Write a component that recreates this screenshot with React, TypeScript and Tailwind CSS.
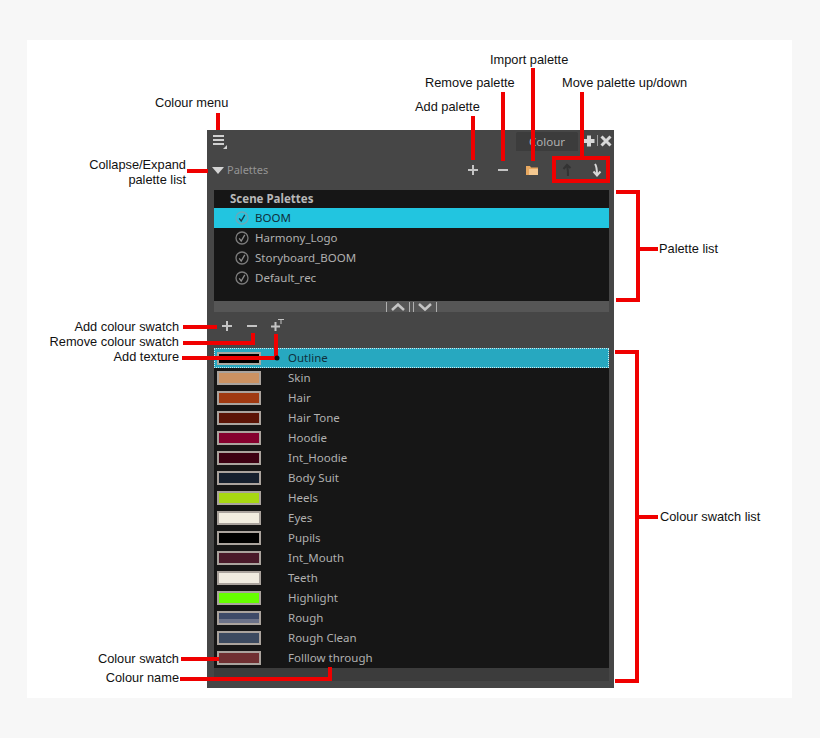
import React from "react";

const palettes = ["Harmony_Logo", "Storyboard_BOOM", "Default_rec"];

const swatches = [
  { name: "Skin", color: "bg-[#cc9262]" },
  { name: "Hair", color: "bg-[#a03a12]" },
  { name: "Hair Tone", color: "bg-[#5c1406]" },
  { name: "Hoodie", color: "bg-[#85002e]" },
  { name: "Int_Hoodie", color: "bg-[#3d0012]" },
  { name: "Body Suit", color: "bg-[#16202e]" },
  { name: "Heels", color: "bg-[#a8d812]" },
  { name: "Eyes", color: "bg-[#f2ede0]" },
  { name: "Pupils", color: "bg-black" },
  { name: "Int_Mouth", color: "bg-[#4a1a2a]" },
  { name: "Teeth", color: "bg-[#f0ebe0]" },
  { name: "Highlight", color: "bg-[#66ff00]" },
  { name: "Rough", color: "bg-[#3e4a68]", rough: true },
  { name: "Rough Clean", color: "bg-[#3c4a60]" },
  { name: "Folllow through", color: "bg-[#703032]" },
];

const labels = [
  { text: "Colour menu", cls: "left-[155px] top-[95px]" },
  { text: "Add palette", cls: "left-[415px] top-[99px]" },
  { text: "Remove palette", cls: "left-[425px] top-[75px]" },
  { text: "Import palette", cls: "left-[490px] top-[52px]" },
  { text: "Move palette up/down", cls: "left-[562px] top-[75px]" },
  { text: "Palette list", cls: "left-[659px] top-[241px]" },
  { text: "Colour swatch list", cls: "left-[660px] top-[509px]" },
  { text: "Collapse/Expand", cls: "right-[634px] top-[157px]" },
  { text: "palette list", cls: "right-[634px] top-[172px]" },
  { text: "Add colour swatch", cls: "right-[641px] top-[319px]" },
  { text: "Remove colour swatch", cls: "right-[641px] top-[334px]" },
  { text: "Add texture", cls: "right-[641px] top-[349px]" },
  { text: "Colour swatch", cls: "right-[641px] top-[651px]" },
  { text: "Colour name", cls: "right-[641px] top-[670px]" },
];

const CheckIcon = ({ active }: { active?: boolean }) => (
  <svg width="14" height="14" viewBox="0 0 14 14" fill="none" className="shrink-0">
    <circle cx="7" cy="7" r="6" stroke={active ? "#6aa8b8" : "#7c7c7c"} strokeWidth="1.3" />
    <path d="M4.2 7.4 L6.2 10 L9.8 3.8" stroke={active ? "#1c3a48" : "#8c8c8c"} strokeWidth="1.3" />
  </svg>
);

const Plus = () => (
  <svg width="12" height="12" viewBox="0 0 12 12" fill="#c4c4c4">
    <rect x="5" y="1" width="2" height="10" />
    <rect x="1" y="5" width="10" height="2" />
  </svg>
);

const Minus = () => (
  <svg width="12" height="12" viewBox="0 0 12 12" fill="#c4c4c4">
    <rect x="1" y="5" width="10" height="2" />
  </svg>
);

const Annotations = () => (
  <svg width="820" height="738" className="absolute left-0 top-0 pointer-events-none" fill="none" stroke="#f00000" strokeWidth="4">
    <path d="M218 113V130" />
    <path d="M187 171H208" />
    <path d="M473 116V160" />
    <path d="M503 92V161" />
    <path d="M533 68V161" />
    <path d="M582 92V157" />
    <rect x="554" y="158" width="54" height="23" />
    <path d="M616 192H638V300H616" />
    <path d="M638 249H658" />
    <path d="M615 352H637V681H615" />
    <path d="M637 517H658" />
    <path d="M183 327H217" />
    <path d="M183 343H253V333" />
    <path d="M182 358H276V334" />
    <path d="M181 659H219" />
    <path d="M180 679H330V667" />
    <circle cx="277" cy="358" r="2.500" fill="#111" stroke="none" />
  </svg>
);

const App = () => {
  return (
    <div className="relative w-[820px] h-[738px] bg-[#f7f7f7] pt-[40px] pl-[27px] overflow-hidden font-['Liberation_Sans',sans-serif]">
      <div className="w-[765px] h-[658px] bg-white pt-[90px] pl-[180px]">
        {/* Colour panel */}
        <div className="w-[407px] h-[558px] bg-[#464646] flex flex-col font-['Noto_Sans',sans-serif] text-[11.5px] text-[#b0b0b0]">
          {/* Title row */}
          <div className="h-[21px] flex items-center pl-[6px]">
            <div className="relative w-[14px] h-[17px] flex flex-col gap-[2px] pt-[3px]">
              <div className="h-[2px] w-[11px] bg-[#d0d0d0]" />
              <div className="h-[2px] w-[11px] bg-[#d0d0d0]" />
              <div className="h-[2px] w-[11px] bg-[#d0d0d0]" />
              <div className="absolute right-0 bottom-0 w-0 h-0 border-l-[4px] border-b-[4px] border-l-transparent border-b-[#d0d0d0]" />
            </div>
            <div className="ml-[289px] mt-[2px] w-[62px] h-[19px] rounded-t-[2px] bg-[#3c3c3c] flex items-center justify-center">
              Colour
            </div>
            <div className="ml-[5px] flex items-center">
              <svg width="12" height="12" viewBox="0 0 12 12" fill="#d8d8d8">
                <rect x="4" y="0.5" width="4" height="11" />
                <rect x="0.5" y="4" width="11" height="4" />
              </svg>
              <div className="w-px h-[11px] bg-[#9a9a9a] mx-[2px]" />
              <svg width="12" height="12" viewBox="0 0 12 12" stroke="#d8d8d8" strokeWidth="3">
                <path d="M1.5 1.5 L10.5 10.5 M10.5 1.5 L1.5 10.5" />
              </svg>
            </div>
          </div>

          {/* Palette toolbar */}
          <div className="h-[39px] flex items-center pl-[5px] pr-[11px] pb-[1px]">
            <div className="w-0 h-0 border-l-[6px] border-r-[6px] border-t-[7px] border-l-transparent border-r-transparent border-t-[#d4d4d4]" />
            <span className="ml-[3px] text-[11px] text-[#949494]">Palettes</span>
            <div className="ml-auto flex items-center">
              <Plus />
              <div className="ml-[18px]">
                <Minus />
              </div>
              <svg width="14" height="12" viewBox="0 0 14 12" className="ml-[16px]">
                <path d="M1 2h4l1 1.5h7v7.5H1z" fill="#e8a860" />
                <path d="M4 5h9v6H4z" fill="#f4c890" />
              </svg>
              <svg width="12" height="14" viewBox="0 0 12 14" fill="none" stroke="#333" strokeWidth="2" className="ml-[22px]">
                <path d="M7 13C7 9 7 6 6 3M2.500 6L6 2l3.500 3" />
              </svg>
              <svg width="12" height="14" viewBox="0 0 12 14" fill="none" stroke="#d8d8d8" strokeWidth="2" className="ml-[18px]">
                <path d="M4 1c1.500 2 2 4 2 11M2.500 8.500L6 12.500l3.500-4" />
              </svg>
            </div>
          </div>

          {/* Palette list */}
          <div className="ml-[7px] mr-[5px] h-[111px] bg-[#161616]">
            <div className="h-[18px] pl-[16px] flex items-center font-bold text-[#b8b8b8]">Scene Palettes</div>
            <div className="h-[20px] bg-[#22c5e0] flex items-center pl-[21px] gap-[6px] text-[#10303c]">
              <CheckIcon active />
              <span>BOOM</span>
            </div>
            {palettes.map((p) => (
              <div key={p} className="h-[20px] flex items-center pl-[21px] gap-[6px]">
                <CheckIcon />
                <span>{p}</span>
              </div>
            ))}
          </div>

          {/* Splitter */}
          <div className="ml-[7px] mr-[5px] h-[11px] bg-[#565656] flex items-center justify-center gap-[3px] pr-[1px]">
            <div className="w-px h-[10px] bg-[#b0b0b0]" />
            <svg width="16" height="10" viewBox="0 0 16 10" fill="none" stroke="#c4c4c4" strokeWidth="2.500">
              <path d="M2 8L8 2.500 14 8" />
            </svg>
            <div className="w-px h-[10px] bg-[#b0b0b0]" />
            <div className="w-px h-[10px] bg-[#b0b0b0]" />
            <svg width="16" height="10" viewBox="0 0 16 10" fill="none" stroke="#c4c4c4" strokeWidth="2.500">
              <path d="M2 2L8 7.500 14 2" />
            </svg>
            <div className="w-px h-[10px] bg-[#b0b0b0]" />
          </div>

          {/* Swatch toolbar */}
          <div className="h-[36px] flex items-start pt-[8px] pl-[14px] gap-[13px]">
            <Plus />
            <Minus />
            <svg width="14" height="14" viewBox="0 0 14 14" fill="#c4c4c4" className="-mt-[2px]">
              <rect x="3.500" y="4" width="2" height="9" />
              <rect x="0" y="7.500" width="9" height="2" />
              <path d="M7 1h6v1h-2.500v4h-1V2H7z" />
            </svg>
          </div>

          {/* Swatch list */}
          <div className="ml-[7px] mr-[5px] h-[320px] bg-[#161616]">
            <div className="h-[20px] bg-[#27a8c0] border border-dotted border-[#cfe8ee] flex items-center pl-[2px] text-[#10303c]">
              <div className="w-[44px] h-[13px] border-2 border-[#a8a8a0] bg-black" />
              <span className="ml-[27px] -mt-[1px]">Outline</span>
            </div>
            {swatches.map((s) => (
              <div key={s.name} className="h-[20px] flex items-center pl-[3px]">
                <div className={`w-[44px] h-[14px] border-2 border-[#aaa39d] ${s.color} flex flex-col justify-end`}>
                  {s.rough && <div className="h-[4px] bg-[#6c7288]" />}
                </div>
                <span className="ml-[27px]">{s.name}</span>
              </div>
            ))}
          </div>

          {/* Scroll bar */}
          <div className="ml-[7px] mr-[5px] h-[13px] bg-[#3c3c3c]" />
        </div>
      </div>

      <Annotations />
      {labels.map((l) => (
        <span key={l.text} className={`absolute ${l.cls} text-[12.8px] leading-[16px] text-[#111] whitespace-nowrap`}>
          {l.text}
        </span>
      ))}
    </div>
  );
};

export default App;
